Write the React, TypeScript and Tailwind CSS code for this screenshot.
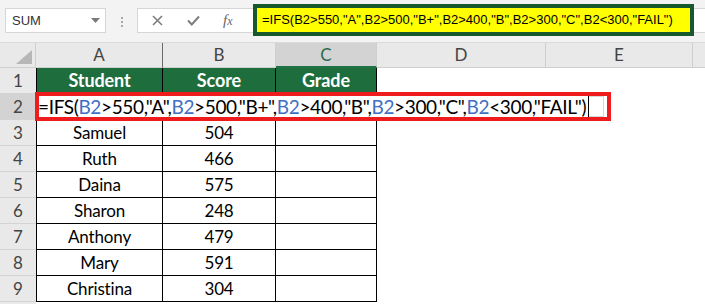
import React from "react";

const rows: [string, string][] = [
  ["Samuel", "504"],
  ["Ruth", "466"],
  ["Daina", "575"],
  ["Sharon", "248"],
  ["Anthony", "479"],
  ["Mary", "591"],
  ["Christina", "304"],
];

const cols = ["A", "B", "C", "D", "E"];

function RowHead({ n, active, hide }: { n: number; active?: boolean; hide?: boolean }) {
  return (
    <div
      className={`flex items-center justify-center border-b border-[#d4d4d4] text-[17px] text-[#444] ${
        active ? "bg-[#d3d3d3]" : "bg-[#e9e9e9]"
      }`}
    >
      {hide ? "" : n}
    </div>
  );
}

function Formula({ blue }: { blue: boolean }) {
  const parts: [string, string][] = [
    ["=IFS(", ""],
    ["B2", "b"],
    [">550,\"A\",", ""],
    ["B2", "b"],
    [">500,\"B+\",", ""],
    ["B2", "b"],
    [">400,\"B\",", ""],
    ["B2", "b"],
    [">300,\"C\",", ""],
    ["B2", "b"],
    ["<300,\"FAIL\")", ""],
  ];
  return (
    <>
      {parts.map(([t, c], i) => (
        <span key={i} className={blue && c === "b" ? "text-[#3f6fc4]" : ""}>
          {t}
        </span>
      ))}
    </>
  );
}

export default function App() {
  return (
    <div className="w-[705px] h-[304px] overflow-hidden bg-white font-['Lato',sans-serif] text-black">
      {/* formula bar */}
      <div className="h-[43px] bg-[#f3f3f3] flex items-start border-b border-[#dadada]">
        <div className="ml-[5px] mt-[8px] w-[101px] h-[25px] bg-white border border-[#d6d6d6] flex items-center justify-between pl-[6px] pr-[5px]">
          <span className="font-['Liberation_Sans',sans-serif] text-[13px] text-[#333]">SUM</span>
          <svg width="9" height="5" viewBox="0 0 9 5">
            <path d="M0 0 L9 0 L4.5 5 Z" fill="#7a7a7a" />
          </svg>
        </div>
        <div className="w-[31px] h-[43px] flex flex-col items-center justify-center gap-[2px]">
          <div className="w-[2px] h-[2px] bg-[#a8a8a8]" />
          <div className="w-[2px] h-[2px] bg-[#a8a8a8]" />
          <div className="w-[2px] h-[2px] bg-[#a8a8a8]" />
        </div>
        <div className="mt-[8px] w-[116px] h-[25px] bg-white border-y border-l border-[#d6d6d6] flex items-center">
          <svg className="ml-[14px]" width="11" height="11" viewBox="0 0 11 11">
            <path d="M1 1 L10 10 M10 1 L1 10" stroke="#7e7e7e" strokeWidth="1.6" />
          </svg>
          <svg className="ml-[24px]" width="13" height="11" viewBox="0 0 13 11">
            <path d="M1 5.5 L4.8 9.5 L12 1.5" stroke="#7e7e7e" strokeWidth="2" fill="none" />
          </svg>
          <span className="ml-[23px] font-['Liberation_Serif',serif] italic text-[15px] text-[#666] leading-none">
            f<span className="text-[12px]">x</span>
          </span>
        </div>
        <div className="mt-[4px] w-[441px] h-[32px] border-[4px] border-[#17582d] bg-[#ffff00] flex items-center pl-[5px] font-['Liberation_Sans',sans-serif] text-[13px] text-black whitespace-nowrap">
          <Formula blue={false} />
        </div>
        <div className="mt-[8px] flex-1 h-[25px] bg-white border-y border-[#d6d6d6]" />
      </div>

      {/* grid */}
      <div className="relative grid grid-cols-[36px_127px_113px_101px_169px_147px_12px] grid-rows-[25px_repeat(10,26px)]">
        {/* column headers */}
        <div className="relative bg-[#e9e9e9] border-r border-b border-[#cfcfcf]">
          <svg className="absolute right-[3px] bottom-[3px]" width="16" height="14" viewBox="0 0 16 14">
            <path d="M16 0 L16 14 L0 14 Z" fill="#b7b7b7" />
          </svg>
        </div>
        {cols.map((c, i) => (
          <div
            key={c}
            className={`flex items-center justify-center text-[17px] border-r ${
              i === 0 ? "border-[#6a6a6a]" : "border-[#cfcfcf]"
            } ${
              c === "C"
                ? "bg-[#d3d3d3] border-b-2 border-b-[#217346] text-[#2d6b4f]"
                : "bg-[#e9e9e9] border-b border-b-[#cfcfcf] text-[#444]"
            }`}
          >
            {c}
          </div>
        ))}
        <div className="bg-[#e9e9e9] border-b border-[#cfcfcf]" />

        {/* row 1 */}
        <RowHead n={1} />
        {["Student", "Score", "Grade"].map((h, i) => (
          <div
            key={h}
            className={`bg-[#1e6e3d] text-white font-bold text-[18px] tracking-[-0.1px] flex items-center justify-center border-r border-b border-black ${
              i === 0 ? "border-l" : ""
            }`}
          >
            {h}
          </div>
        ))}
        <div />
        <div />
        <div />

        {/* row 2 */}
        <RowHead n={2} active />
        <div className="border-l border-r border-b border-black" />
        <div className="border-r border-b border-black" />
        <div className="border-r border-b border-black" />
        <div />
        <div />
        <div />

        {rows.map(([name, score], r) => (
          <React.Fragment key={name}>
            <RowHead n={r + 3} />
            <div className="flex items-center justify-center text-[17px] tracking-[-0.15px] border-l border-r border-b border-black">
              {name}
            </div>
            <div className="flex items-center justify-center text-[17px] tracking-[-0.15px] border-r border-b border-black">
              {score}
            </div>
            <div className="border-r border-b border-black" />
            <div />
            <div />
            <div />
          </React.Fragment>
        ))}

        <RowHead n={10} hide />
        <div />
        <div />
        <div />
        <div />
        <div />
        <div />

        {/* edit box overlay on row 2 */}
        <div className="absolute left-[35px] top-[49px] w-[576px] h-[29px] border-[4px] border-[#ee1c1c] bg-white flex items-center text-[19px] tracking-[-0.35px] whitespace-nowrap leading-none">
          <span className="-ml-[1px]">
            <Formula blue={true} />
          </span>
          <div className="w-px h-[21px] bg-black ml-[2px]" />
          <div className="w-[15px] h-[21px] border-y border-r border-[#d8d8d8]" />
        </div>
      </div>
    </div>
  );
}
